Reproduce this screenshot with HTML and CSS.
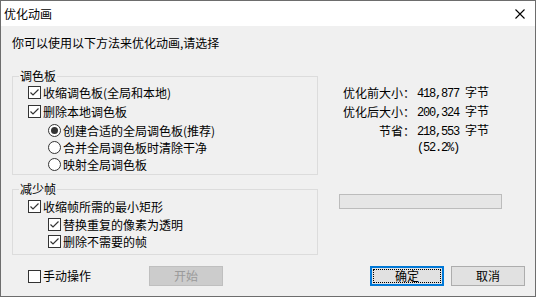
FILE: index.html
```html
<!DOCTYPE html>
<html lang="zh-CN">
	<head>
		<meta charset="UTF-8" />
		<meta name="viewport" content="width=device-width, initial-scale=1.0" />
		<title>优化动画</title>
		<link rel="stylesheet" href="styles.css">
	</head>
	<body>
		<div class="window">
			<div class="titlebar">
				<span class="title">优化动画</span>
				<svg class="close" width="10" height="10" viewBox="0 0 10 10"><path d="M0.5 0.5L9.5 9.5M9.5 0.5L0.5 9.5" stroke="#000" stroke-width="1.1" fill="none"/></svg>
			</div>
			<div class="content">
				<p class="intro">你可以使用以下方法来优化动画,请选择</p>
				<div class="main">
					<div class="groups">
						<fieldset class="group group-palette">
							<legend>调色板</legend>
							<label class="opt">
								<svg class="box" width="13" height="13" viewBox="0 0 13 13"><rect x="0.5" y="0.5" width="12" height="12" fill="#fff" stroke="#333"/><path d="M2.5 6.5L5 9L10.5 3.5" fill="none" stroke="#333" stroke-width="1.2"/></svg>
								<span>收缩调色板(全局和本地)</span>
							</label>
							<label class="opt opt-gap">
								<svg class="box" width="13" height="13" viewBox="0 0 13 13"><rect x="0.5" y="0.5" width="12" height="12" fill="#fff" stroke="#333"/><path d="M2.5 6.5L5 9L10.5 3.5" fill="none" stroke="#333" stroke-width="1.2"/></svg>
								<span>删除本地调色板</span>
							</label>
							<label class="opt sub opt-gap">
								<svg class="box" width="13" height="13" viewBox="0 0 13 13"><circle cx="6.5" cy="6.5" r="6" fill="#fff" stroke="#333"/><circle cx="6.5" cy="6.5" r="3.5" fill="#333"/></svg>
								<span>创建合适的全局调色板(推荐)</span>
							</label>
							<label class="opt sub">
								<svg class="box" width="13" height="13" viewBox="0 0 13 13"><circle cx="6.5" cy="6.5" r="6" fill="#fff" stroke="#333"/></svg>
								<span>合并全局调色板时清除干净</span>
							</label>
							<label class="opt sub">
								<svg class="box" width="13" height="13" viewBox="0 0 13 13"><circle cx="6.5" cy="6.5" r="6" fill="#fff" stroke="#333"/></svg>
								<span>映射全局调色板</span>
							</label>
						</fieldset>
						<fieldset class="group group-frames">
							<legend>减少帧</legend>
							<label class="opt">
								<svg class="box" width="13" height="13" viewBox="0 0 13 13"><rect x="0.5" y="0.5" width="12" height="12" fill="#fff" stroke="#333"/><path d="M2.5 6.5L5 9L10.5 3.5" fill="none" stroke="#333" stroke-width="1.2"/></svg>
								<span>收缩帧所需的最小矩形</span>
							</label>
							<label class="opt sub opt-gap-sm">
								<svg class="box" width="13" height="13" viewBox="0 0 13 13"><rect x="0.5" y="0.5" width="12" height="12" fill="#fff" stroke="#333"/><path d="M2.5 6.5L5 9L10.5 3.5" fill="none" stroke="#333" stroke-width="1.2"/></svg>
								<span>替换重复的像素为透明</span>
							</label>
							<label class="opt sub">
								<svg class="box" width="13" height="13" viewBox="0 0 13 13"><rect x="0.5" y="0.5" width="12" height="12" fill="#fff" stroke="#333"/><path d="M2.5 6.5L5 9L10.5 3.5" fill="none" stroke="#333" stroke-width="1.2"/></svg>
								<span>删除不需要的帧</span>
							</label>
						</fieldset>
					</div>
					<div class="side">
						<div class="stats">
							<div class="stat"><span class="stat-label">优化前大小：</span><span class="stat-value"><span class="num">418,877 </span>字节</span></div>
							<div class="stat"><span class="stat-label">优化后大小：</span><span class="stat-value"><span class="num">200,324 </span>字节</span></div>
							<div class="stat"><span class="stat-label">节省：</span><span class="stat-value"><span class="num">218,553 </span>字节</span></div>
							<div class="stat stat-note"><span class="stat-label"></span><span class="stat-value"><span class="num">(52.2%)</span></span></div>
						</div>
						<div class="progress"></div>
					</div>
				</div>
				<div class="actions">
					<label class="opt manual">
						<svg class="box" width="13" height="13" viewBox="0 0 13 13"><rect x="0.5" y="0.5" width="12" height="12" fill="#fff" stroke="#333"/></svg>
						<span>手动操作</span>
					</label>
					<button class="btn" disabled>开始</button>
					<button class="btn btn-default">确定</button>
					<button class="btn btn-cancel">取消</button>
				</div>
			</div>
		</div>
	</body>
</html>
```

FILE: styles.css
```css
* {
	padding: 0;
	margin: 0;
	box-sizing: border-box;
}
body {
	width: 536px;
	height: 297px;
	background: #fff;
	color: #000;
	font: 12px/14px "Noto Sans CJK SC", "Liberation Sans", sans-serif;
}
.window {
	display: flex;
	flex-direction: column;
	width: 536px;
	height: 297px;
	border: 1px solid #6d6d6d;
	background: #f0f0f0;
}
.titlebar {
	display: flex;
	align-items: center;
	justify-content: space-between;
	height: 25px;
	padding: 0 10px 0 3px;
	background: #fff;
}
.content {
	flex: 1;
	padding: 10px 10px 0 11px;
}
.intro {
	line-height: 14px;
}
.main {
	display: flex;
	margin-top: 19px;
}
.groups {
	display: flex;
	flex-direction: column;
	gap: 7px;
	width: 306px;
}
.group {
	border: 1px solid #dcdcdc;
	padding: 1px 0 1px 0;
}
.group legend {
	margin-left: 6px;
	padding: 0 1px;
	line-height: 14px;
}
.group-frames {
	padding: 2px 0 4px 0;
}
.opt {
	display: flex;
	align-items: center;
	gap: 2px;
	height: 17px;
}
.group .opt {
	margin-left: 15px;
}
.opt .box {
	flex: none;
}
.group .opt.sub {
	margin-left: 35px;
}
.group .opt-gap {
	margin-top: 2px;
}
.group .opt-gap-sm {
	margin-top: 1px;
}
.side {
	flex: 1;
	padding: 14px 0 0 21px;
}
.stat {
	display: flex;
	align-items: center;
	height: 19px;
}
.stat-note {
	height: 14px;
}
.stat-label {
	width: 76px;
	text-align: right;
}
.stat-value {
	margin-left: 2px;
}
.num {
	font-family: "Liberation Mono", monospace;
	font-size: 12px;
	letter-spacing: -1.2px;
	white-space: pre;
}
.progress {
	width: 163px;
	height: 15px;
	margin-top: 40px;
	border: 1px solid #bcbcbc;
	background: #e6e6e6;
}
.actions {
	display: flex;
	align-items: center;
	height: 20px;
	margin-top: 11px;
}
.manual {
	width: 121px;
	margin-left: 16px;
}
.btn {
	width: 74px;
	height: 20px;
	border: 1px solid #adadad;
	background: #e1e1e1;
	color: #000;
	font: inherit;
}
.btn:disabled {
	border-color: #bfbfbf;
	background: #cccccc;
	color: #9a9a9a;
}
.btn-default {
	margin-left: auto;
	border-color: #0078d7;
	box-shadow: inset 0 0 0 1px #0078d7;
	outline: 1px dotted #000;
	outline-offset: -4px;
}
.btn-cancel {
	margin-left: 7px;
}
```
